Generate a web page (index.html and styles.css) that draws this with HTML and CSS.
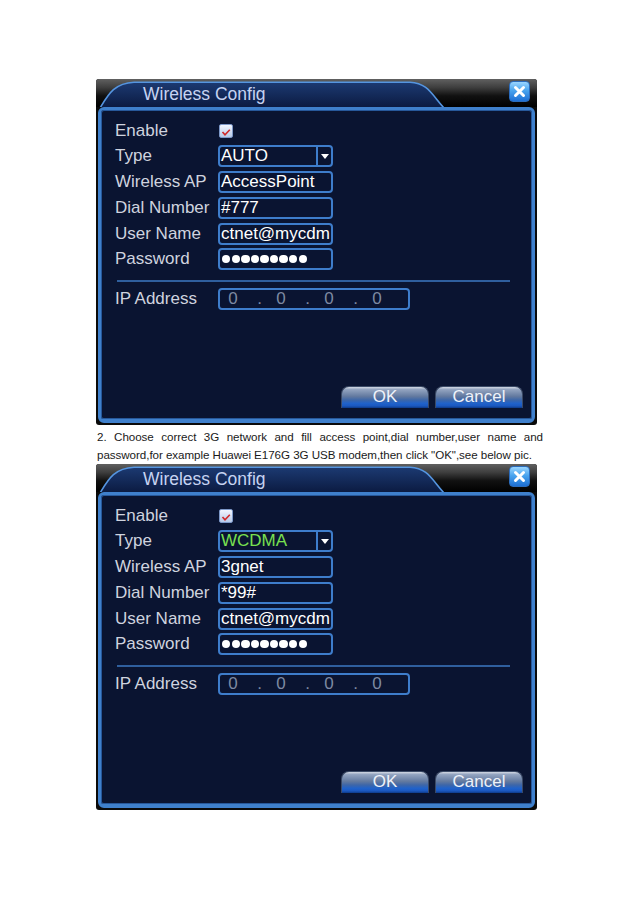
FILE: index.html
```html
<!DOCTYPE html>
<html lang="en">
<head>
<meta charset="utf-8">
<title>Wireless Config</title>
<link rel="stylesheet" href="styles.css">
</head>
<body>
<div class="page">
  <section class="dialog">
    <header class="dlg-head">
      <svg class="tab" width="441" height="28" viewBox="0 0 441 28" aria-hidden="true">
        <defs><linearGradient id="tabg1" x1="0" y1="0" x2="0" y2="1"><stop offset="0" stop-color="#1c3a72"/><stop offset="1" stop-color="#0b1a40"/></linearGradient></defs>
        <path d="M4 29 C 12 16, 18 4, 38 3.2 L 314 3.2 C 332 4, 336 16, 348 29" fill="url(#tabg1)" stroke="#5595e0" stroke-width="1.6"/>
      </svg>
      <h1 class="dlg-title">Wireless Config</h1>
      <button class="close" aria-label="Close"><svg width="13" height="13" viewBox="0 0 13 13"><path d="M2.5 2.5 L10.5 10.5 M10.5 2.5 L2.5 10.5" stroke="#fff" stroke-width="3" stroke-linecap="round"/></svg></button>
    </header>
    <div class="panel">
      <div class="form">
        <span class="lbl">Enable</span>
        <span class="check"><svg width="14" height="14" viewBox="0 0 14 14"><path d="M3.5 8 L6 10.8 L10.8 5.8" fill="none" stroke="#d02a2a" stroke-width="1.6"/></svg></span>
        <span class="lbl">Type</span>
        <div class="field select"><span class="val">AUTO</span><span class="arrow"><svg width="8" height="5" viewBox="0 0 8 5"><path d="M0 0 H8 L4 5 Z" fill="#fff"/></svg></span></div>
        <span class="lbl">Wireless AP</span>
        <div class="field">AccessPoint</div>
        <span class="lbl">Dial Number</span>
        <div class="field">#777</div>
        <span class="lbl">User Name</span>
        <div class="field">ctnet@mycdm</div>
        <span class="lbl">Password</span>
        <div class="field dots"><i></i><i></i><i></i><i></i><i></i><i></i><i></i><i></i><i></i></div>
      </div>
      <div class="sep"></div>
      <div class="iprow">
        <span class="lbl">IP Address</span>
        <div class="field ip"><span class="n">0</span><span class="d">.</span><span class="n">0</span><span class="d">.</span><span class="n">0</span><span class="d">.</span><span class="n">0</span></div>
      </div>
      <div class="actions"><button class="btn">OK</button><button class="btn">Cancel</button></div>
    </div>
  </section>

  <p class="note">2. Choose correct 3G network and fill access point,dial number,user name and password,for example Huawei E176G 3G USB modem,then click "OK",see below pic.</p>

  <section class="dialog">
    <header class="dlg-head">
      <svg class="tab" width="441" height="28" viewBox="0 0 441 28" aria-hidden="true">
        <defs><linearGradient id="tabg2" x1="0" y1="0" x2="0" y2="1"><stop offset="0" stop-color="#1c3a72"/><stop offset="1" stop-color="#0b1a40"/></linearGradient></defs>
        <path d="M4 29 C 12 16, 18 4, 38 3.2 L 314 3.2 C 332 4, 336 16, 348 29" fill="url(#tabg2)" stroke="#5595e0" stroke-width="1.6"/>
      </svg>
      <h1 class="dlg-title">Wireless Config</h1>
      <button class="close" aria-label="Close"><svg width="13" height="13" viewBox="0 0 13 13"><path d="M2.5 2.5 L10.5 10.5 M10.5 2.5 L2.5 10.5" stroke="#fff" stroke-width="3" stroke-linecap="round"/></svg></button>
    </header>
    <div class="panel">
      <div class="form">
        <span class="lbl">Enable</span>
        <span class="check"><svg width="14" height="14" viewBox="0 0 14 14"><path d="M3.5 8 L6 10.8 L10.8 5.8" fill="none" stroke="#d02a2a" stroke-width="1.6"/></svg></span>
        <span class="lbl">Type</span>
        <div class="field select"><span class="val green">WCDMA</span><span class="arrow"><svg width="8" height="5" viewBox="0 0 8 5"><path d="M0 0 H8 L4 5 Z" fill="#fff"/></svg></span></div>
        <span class="lbl">Wireless AP</span>
        <div class="field">3gnet</div>
        <span class="lbl">Dial Number</span>
        <div class="field">*99#</div>
        <span class="lbl">User Name</span>
        <div class="field">ctnet@mycdm</div>
        <span class="lbl">Password</span>
        <div class="field dots"><i></i><i></i><i></i><i></i><i></i><i></i><i></i><i></i><i></i></div>
      </div>
      <div class="sep"></div>
      <div class="iprow">
        <span class="lbl">IP Address</span>
        <div class="field ip"><span class="n">0</span><span class="d">.</span><span class="n">0</span><span class="d">.</span><span class="n">0</span><span class="d">.</span><span class="n">0</span></div>
      </div>
      <div class="actions"><button class="btn">OK</button><button class="btn">Cancel</button></div>
    </div>
  </section>
</div>
</body>
</html>
```

FILE: styles.css
```css
* { box-sizing: border-box; }

body {
  margin: 0;
  background: #fff;
  font-family: "Liberation Sans", Arial, sans-serif;
}

.page {
  width: 638px;
  padding: 79px 0 0 96px;
}

.dialog {
  width: 441px;
  height: 346px;
  display: flex;
  flex-direction: column;
  background: #0a0a0a;
  border-radius: 3px;
}

.dlg-head {
  position: relative;
  flex: none;
  height: 28px;
  display: flex;
  align-items: flex-start;
  background: linear-gradient(#606060 0%, #3e3e3e 30%, #111 60%, #000 100%);
  border-radius: 3px 3px 0 0;
}

.tab {
  position: absolute;
  left: 0;
  top: 0;
}

.dlg-title {
  position: relative;
  margin: 0;
  padding: 2px 0 0 47px;
  font-size: 17.5px;
  font-weight: normal;
  line-height: 26px;
  color: #c6d3f2;
}

.close {
  position: relative;
  margin: 2px 7px 0 auto;
  width: 21px;
  height: 21px;
  padding: 0;
  border: 1px solid #2b6cbc;
  border-radius: 4px;
  background: linear-gradient(#9bd6ff 0%, #49a4ee 45%, #1d6fd4 100%);
  display: flex;
  align-items: center;
  justify-content: center;
}

.panel {
  flex: 1;
  margin: 0 2px 2px;
  border: 3px solid #3f80cc;
  border-bottom-width: 4px;
  border-radius: 6px;
  background: #0a1431;
  box-shadow: inset 0 0 0 1px #27589a;
  display: flex;
  flex-direction: column;
  padding: 9.5px 0 11px 14px;
}

.form {
  display: grid;
  grid-template-columns: 103px 115px;
  grid-auto-rows: 22px;
  row-gap: 3.75px;
  align-items: center;
}

.lbl {
  font-size: 17px;
  line-height: 22px;
  color: #cfd3df;
  white-space: nowrap;
}

.check {
  width: 14px;
  height: 14px;
  margin-left: 1px;
  border: 1px solid #7d98c8;
  border-radius: 2px;
  background: linear-gradient(#f2f6ff, #b8cae8);
  display: flex;
}

.check svg { margin: -1px; }

.field {
  height: 22px;
  border: 2px solid #3e7dcb;
  border-radius: 4px;
  color: #fff;
  font-size: 17px;
  line-height: 16px;
  padding: 1px 0 0 1px;
  white-space: nowrap;
  overflow: hidden;
}

.select {
  display: flex;
  padding: 0;
}

.select .val {
  flex: 1;
  padding: 1px 0 0 1px;
}

.green { color: #78e050; }

.select .arrow {
  width: 15px;
  border-left: 2px solid #3e7dcb;
  display: flex;
  align-items: center;
  justify-content: center;
}

.dots {
  display: flex;
  align-items: center;
  gap: 1.2px;
  padding: 0 0 0 2px;
}

.dots i {
  width: 8.4px;
  height: 8.4px;
  border-radius: 50%;
  background: #fff;
}

.sep {
  height: 2px;
  margin: 10px 22px 0 2px;
  background: #2f5f9e;
}

.iprow {
  display: grid;
  grid-template-columns: 103px 192px;
  align-items: center;
  margin-top: 6px;
}

.ip {
  display: flex;
  color: #7d8aa2;
  padding-left: 1px;
}

.ip .n {
  width: 24px;
  text-align: center;
}

.ip .d {
  width: 24px;
  padding-left: 5px;
  text-align: center;
}

.actions {
  margin-top: auto;
  display: flex;
  justify-content: flex-end;
  gap: 6px;
  padding-right: 9px;
}

.btn {
  width: 88px;
  height: 22px;
  padding: 0 0 1px;
  border: 1px solid #3b4a66;
  border-bottom: none;
  border-radius: 8px 8px 0 0;
  background: linear-gradient(#d3d9e4 0%, #93a4c0 12%, #62799f 45%, #3d66a8 62%, #2062ca 78%, #1b58c0 90%, #0d3a88 100%);
  color: #eef2fa;
  font-family: "Liberation Sans", Arial, sans-serif;
  font-size: 17px;
  line-height: 20px;
}

.note {
  margin: 3px 0 0 1px;
  width: 446px;
  font-size: 11.6px;
  letter-spacing: -0.05px;
  line-height: 18px;
  text-align: justify;
  color: #1a1a1a;
}
```
